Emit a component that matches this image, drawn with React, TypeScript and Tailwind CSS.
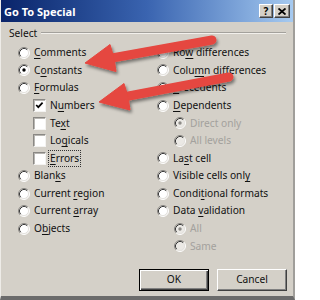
import React from "react";

const Radio = ({ checked = false, disabled = false }: { checked?: boolean; disabled?: boolean }) => (
  <svg width="12" height="12" viewBox="0 0 12 12" className="shrink-0">
    <circle cx="6" cy="6" r="5" fill={disabled ? "#ebe9e5" : "#ffffff"} />
    <path d="M2.11 9.89 A5.5 5.5 0 0 1 9.89 2.11" stroke="#8a8884" strokeWidth="1" fill="none" />
    <path d="M9.89 2.11 A5.5 5.5 0 0 1 2.11 9.89" stroke="#ffffff" strokeWidth="1" fill="none" />
    <path d="M2.82 9.18 A4.5 4.5 0 0 1 9.18 2.82" stroke="#3a3a3a" strokeWidth="1" fill="none" />
    <path d="M9.18 2.82 A4.5 4.5 0 0 1 2.82 9.18" stroke="#e4e2de" strokeWidth="1" fill="none" />
    {checked && <circle cx="6" cy="6" r="1.7" fill={disabled ? "#8e8c88" : "#000000"} />}
  </svg>
);

const Check = ({ checked = false }: { checked?: boolean }) => (
  <span className="w-[13px] h-[13px] shrink-0 bg-white border border-t-[#8a8884] border-l-[#8a8884] border-b-[#f4f3f1] border-r-[#f4f3f1] shadow-[inset_1px_1px_0_#b8b6b2] flex items-center justify-center">
    {checked && (
      <svg width="9" height="9" viewBox="0 0 9 9">
        <polyline points="1.2,4 3.3,6.2 7.6,1.6" stroke="#000" strokeWidth="1.7" fill="none" />
      </svg>
    )}
  </span>
);

const U = ({ children }: { children: React.ReactNode }) => <span className="underline underline-offset-[1.5px]">{children}</span>;

const Row = ({ children, indent = "" }: { children: React.ReactNode; indent?: string }) => (
  <div className={`flex items-center h-[17.6px] gap-[4px] whitespace-nowrap ${indent}`}>{children}</div>
);

export default function App() {
  return (
    <div className="relative w-[295px] h-[300px] overflow-hidden bg-[#d4d0c8] border-l border-l-[#eeece8] border-r-2 border-r-[#a09e9a] border-b-4 border-b-[#6b6b6b] font-['Noto_Sans',sans-serif] text-[10.2px] text-[#111]">
      {/* Title bar */}
      <div className="h-[22px] flex items-center bg-linear-to-r from-[#0a246a] via-[#3a64b0] to-[#a6caf0] pl-[3px] pr-[3px]">
        <span className="font-bold text-[11px] text-white leading-none">Go To Special</span>
        <div className="ml-auto flex gap-[1px]">
          <div className="w-[14px] h-[14px] bg-[#d4d0c8] border border-t-white border-l-white border-b-[#404040] border-r-[#404040] shadow-[inset_-1px_-1px_0_#808080] flex items-center justify-center">
            <span className="font-bold text-[10px] leading-none text-black">?</span>
          </div>
          <div className="w-[16px] h-[14px] bg-[#d4d0c8] border border-t-white border-l-white border-b-[#404040] border-r-[#404040] shadow-[inset_-1px_-1px_0_#808080] flex items-center justify-center">
            <svg width="8" height="7" viewBox="0 0 8 7">
              <path d="M0.5 0.5 L7.5 6.5 M7.5 0.5 L0.5 6.5" stroke="#000" strokeWidth="1.8" />
            </svg>
          </div>
        </div>
      </div>

      {/* Select label */}
      <div className="mt-[5px] h-[12px] flex items-center pl-[8px] pr-[7px]">
        <span className="leading-none">Select</span>
        <div className="ml-[4px] flex-1 h-[2px] border-t border-t-[#a3a19c] border-b border-b-[#f2f0ec]" />
      </div>

      {/* Columns */}
      <div className="mt-[5px] flex pl-[17px]">
        <div className="w-[139px] flex flex-col">
          <Row><Radio /><span><U>C</U>omments</span></Row>
          <Row><Radio checked /><span>C<U>o</U>nstants</span></Row>
          <Row><Radio /><span><U>F</U>ormulas</span></Row>
          <Row indent="pl-[15px]"><Check checked /><span>N<U>u</U>mbers</span></Row>
          <Row indent="pl-[15px]"><Check /><span>Te<U>x</U>t</span></Row>
          <Row indent="pl-[15px]"><Check /><span>Lo<U>g</U>icals</span></Row>
          <Row indent="pl-[15px]"><Check /><span className="-ml-[2px] border border-dotted border-[#333] px-[1px] leading-[15px]"><U>E</U>rrors</span></Row>
          <Row><Radio /><span>Blan<U>k</U>s</span></Row>
          <Row><Radio /><span>Current <U>r</U>egion</span></Row>
          <Row><Radio /><span>Current <U>a</U>rray</span></Row>
          <Row><Radio /><span>O<U>b</U>jects</span></Row>
        </div>
        <div className="flex flex-col">
          <Row><Radio /><span>Ro<U>w</U> differences</span></Row>
          <Row><Radio /><span>Colu<U>m</U>n differences</span></Row>
          <Row><Radio /><span><U>P</U>recedents</span></Row>
          <Row><Radio /><span><U>D</U>ependents</span></Row>
          <Row indent="pl-[17px]"><Radio checked disabled /><span className="text-[#a3a19d]">Direct only</span></Row>
          <Row indent="pl-[17px]"><Radio disabled /><span className="text-[#a3a19d]">All levels</span></Row>
          <Row><Radio /><span>La<U>s</U>t cell</span></Row>
          <Row><Radio /><span>Visible cells onl<U>y</U></span></Row>
          <Row><Radio /><span>Condi<U>t</U>ional formats</span></Row>
          <Row><Radio /><span>Data <U>v</U>alidation</span></Row>
          <Row indent="pl-[17px]"><Radio checked disabled /><span className="text-[#a3a19d]">All</span></Row>
          <Row indent="pl-[17px]"><Radio disabled /><span className="text-[#a3a19d]">Same</span></Row>
        </div>
      </div>

      {/* Buttons */}
      <div className="mt-[14px] flex justify-end gap-[8px] pr-[6px]">
        <button className="w-[70px] h-[22px] border border-black bg-[#d4d0c8] shadow-[inset_1px_1px_0_#ffffff,inset_-1px_-1px_0_#404040,inset_-2px_-2px_0_#808080] text-[10.2px] text-[#111] flex items-center justify-center">
          OK
        </button>
        <button className="w-[70px] h-[22px] border border-t-white border-l-white border-b-[#404040] border-r-[#404040] bg-[#d4d0c8] shadow-[inset_-1px_-1px_0_#808080] text-[10.2px] text-[#111] flex items-center justify-center">
          Cancel
        </button>
      </div>

      {/* Red arrows overlay */}
      <svg className="absolute left-0 top-0 pointer-events-none" width="295" height="300" viewBox="-1 0 295 300">
        <defs>
          <filter id="sh" x="-20%" y="-50%" width="140%" height="200%">
            <feDropShadow dx="1.5" dy="2.5" stdDeviation="1.6" floodColor="#000" floodOpacity="0.45" />
          </filter>
        </defs>
        <g filter="url(#sh)" fill="#e5473f" stroke="#e5473f">
          <line x1="110" y1="58" x2="210" y2="40" strokeWidth="9" strokeLinecap="round" />
          <polygon points="83,63 108,44.5 112,58 114,71.5" strokeWidth="1" strokeLinejoin="round" />
        </g>
        <g filter="url(#sh)" fill="#e5473f" stroke="#e5473f">
          <line x1="124" y1="96.5" x2="227" y2="77" strokeWidth="9" strokeLinecap="round" />
          <polygon points="97,102 122,83.5 126,96.5 128,110" strokeWidth="1" strokeLinejoin="round" />
        </g>
      </svg>
    </div>
  );
}
